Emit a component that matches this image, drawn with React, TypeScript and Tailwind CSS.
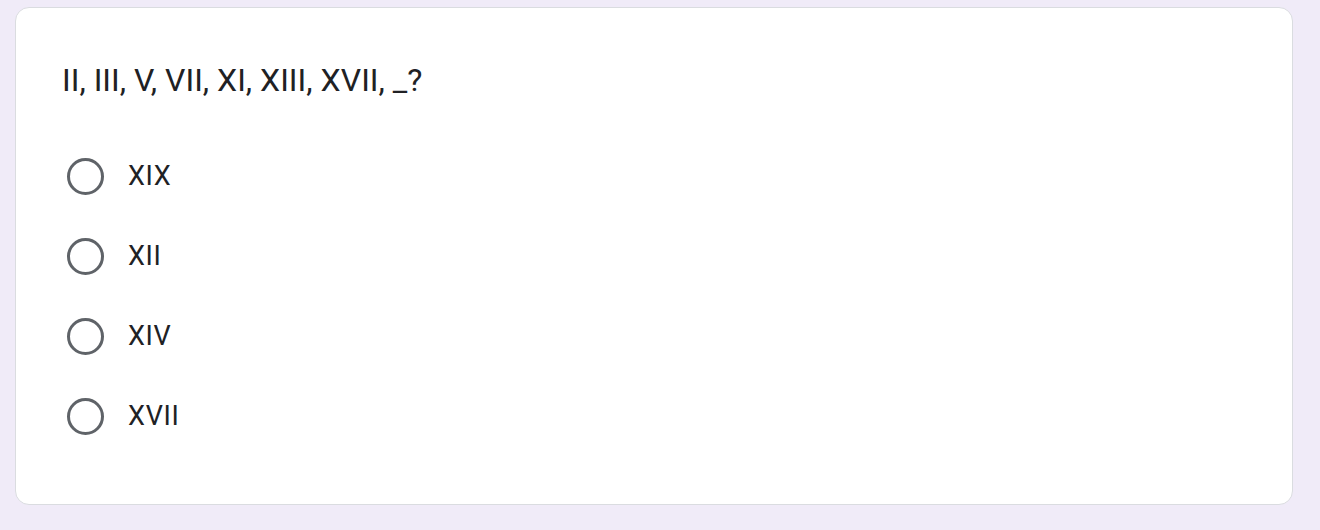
const options = ["XIX", "XII", "XIV", "XVII"];

function Radio() {
  return (
    <span className="box-border block h-[37px] w-[37px] shrink-0 rounded-full border-[3.5px] border-[#5f6368]" />
  );
}

export default function App() {
  return (
    <div className="min-h-[530px] bg-[#f0ebf8] pt-[7px] pl-[15px] pr-[27px] pb-[25px] font-['Roboto',sans-serif] text-[#202124]">
      <div className="h-[498px] rounded-[14px] border border-[#dadce0] bg-white pt-[52px] pl-[46px] pb-[48px]">
        <div className="text-[32px] leading-[40px]">II, III, V, VII, XI, XIII, XVII, _?</div>
        <div className="mt-[36px] flex flex-col">
          {options.map((o) => (
            <label key={o} className="flex h-[80px] items-center pl-[5px]">
              <Radio />
              <span className="ml-[24px] text-[27px] leading-none tracking-[0.6px]">{o}</span>
            </label>
          ))}
        </div>
      </div>
    </div>
  );
}
